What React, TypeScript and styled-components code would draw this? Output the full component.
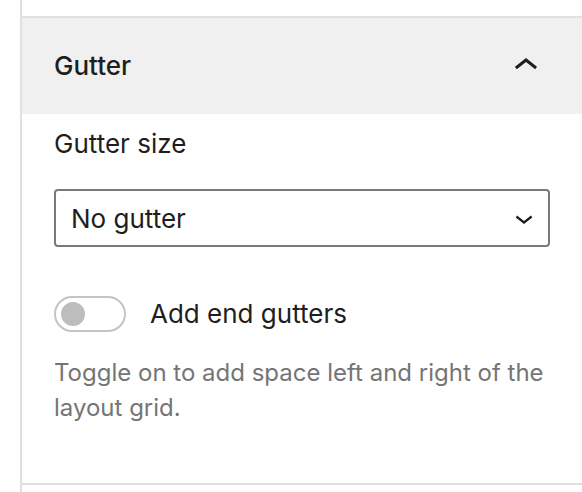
import styled, { createGlobalStyle } from "styled-components";

const GlobalStyle = createGlobalStyle`
  body {
    margin: 0;
    background: #fff;
    font-family: Inter, "Noto Sans", sans-serif;
    color: #1e1e1e;
  }
`;

export default function App() {
  return (
    <>
      <GlobalStyle />
      <Sidebar>
        <Panel>
          <PanelHeader>
            <PanelTitle>Gutter</PanelTitle>
            <svg width="48" height="48" viewBox="0 0 24 24" aria-hidden="true">
              <path
                d="M6.5 12.4L12 8l5.5 4.4-.9 1.2L12 10l-4.6 3.6-1-1.2z"
                fill="#1e1e1e"
              />
            </svg>
          </PanelHeader>

          <PanelBody>
            <Label htmlFor="gutter-size">Gutter size</Label>
            <SelectWrap>
              <Select id="gutter-size" defaultValue="none">
                <option value="none">No gutter</option>
                <option value="small">Small</option>
                <option value="medium">Medium</option>
                <option value="large">Large</option>
              </Select>
              <SelectChevron width="36" height="36" viewBox="0 0 24 24" aria-hidden="true">
                <path
                  d="M17.5 11.6L12 16l-5.5-4.4.9-1.2L12 14l4.6-3.6 1 1.2z"
                  fill="#1e1e1e"
                />
              </SelectChevron>
            </SelectWrap>

            <ToggleRow>
              <Track>
                <Thumb />
              </Track>
              <ToggleLabel>Add end gutters</ToggleLabel>
            </ToggleRow>
            <Help>Toggle on to add space left and right of the layout grid.</Help>
          </PanelBody>
        </Panel>
      </Sidebar>
    </>
  );
}

const Sidebar = styled.div`
  margin-left: 20px;
  border-left: 2px solid #e0e0e0;
  min-height: 100vh;
  padding-top: 16px;
  box-sizing: border-box;
`;

const Panel = styled.section`
  border-top: 2px solid #e0e0e0;
  border-bottom: 2px solid #e0e0e0;
`;

const PanelHeader = styled.div`
  height: 96px;
  background: #f0f0f0;
  display: flex;
  align-items: center;
  justify-content: space-between;
  padding: 0 32px;
`;

const PanelTitle = styled.h2`
  margin: 0;
  font-size: 26px;
  font-weight: 500;
  line-height: 36px;
  color: #1e1e1e;
`;

const PanelBody = styled.div`
  padding: 12px 32px 58px;
`;

const Label = styled.label`
  display: block;
  font-size: 26px;
  line-height: 36px;
  margin-bottom: 27px;
`;

const SelectWrap = styled.div`
  position: relative;
`;

const Select = styled.select`
  appearance: none;
  width: 100%;
  height: 58px;
  box-sizing: border-box;
  border: 2px solid #7a7a7a;
  border-radius: 4px;
  background: #fff;
  padding: 0 48px 0 15px;
  font-family: inherit;
  font-size: 26px;
  color: #1e1e1e;
`;

const SelectChevron = styled.svg`
  position: absolute;
  right: 8px;
  top: 11px;
  pointer-events: none;
`;

const ToggleRow = styled.div`
  display: flex;
  align-items: center;
  gap: 24px;
  margin-top: 49px;
`;

const Track = styled.span`
  width: 72px;
  height: 36px;
  box-sizing: border-box;
  border: 2px solid #c4c4c4;
  border-radius: 18px;
  display: flex;
  align-items: center;
  padding-left: 5px;
`;

const Thumb = styled.span`
  width: 24px;
  height: 24px;
  border-radius: 50%;
  background: #bdbdbd;
`;

const ToggleLabel = styled.span`
  font-size: 26px;
  line-height: 36px;
`;

const Help = styled.p`
  margin: 23px 0 0;
  font-size: 24px;
  line-height: 35px;
  color: #757575;
`;
